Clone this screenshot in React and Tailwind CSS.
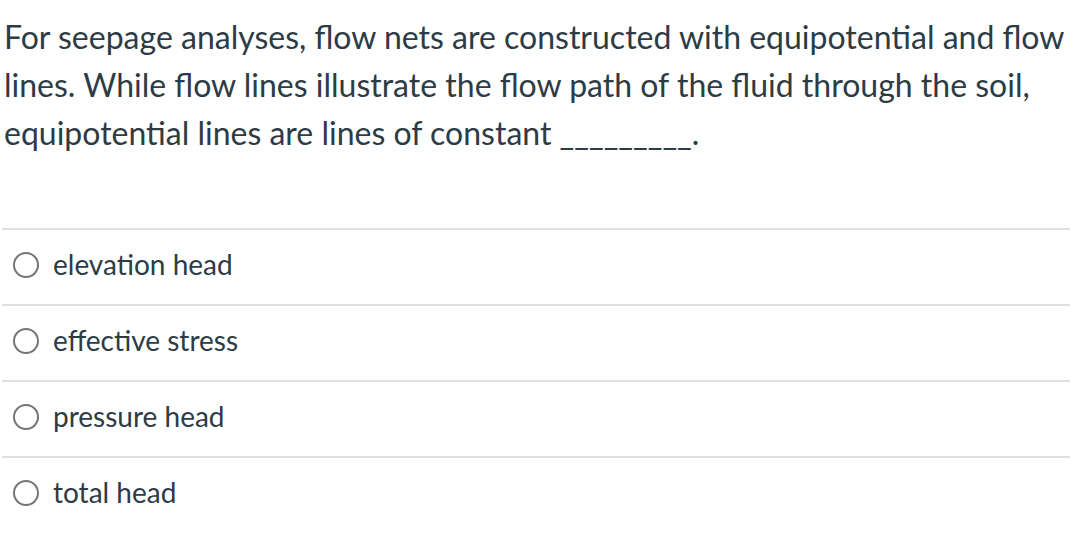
import React from "react";

const options = ["elevation head", "effective stress", "pressure head", "total head"];

const App = () => {
    return (
        <div
            className="w-[1080px] h-[536px] bg-white text-[#2d3b45] overflow-hidden"
            style={{ fontFamily: "Lato, 'Liberation Sans', sans-serif" }}
        >
            <div className="pl-[4px] pr-[6px] pt-[13px] text-[32px] leading-[48px]">
                For seepage analyses, flow nets are constructed with equipotential and flow
                lines. While flow lines illustrate the flow path of the fluid through the soil,
                equipotential lines are lines of constant _________.
            </div>

            <div className="mt-[71px] ml-[2px] w-[1068px]">
                {options.map((opt) => (
                    <div
                        key={opt}
                        className="h-[76px] pb-[4px] border-t-2 border-[#e0e0e0] flex items-center"
                    >
                        <span className="ml-[11px] w-[26px] h-[26px] rounded-full border-2 border-[#757575] bg-white shrink-0" />
                        <span className="ml-[14px] pb-[2px] text-[28px] leading-none">{opt}</span>
                    </div>
                ))}
            </div>
        </div>
    );
};

export default App;
